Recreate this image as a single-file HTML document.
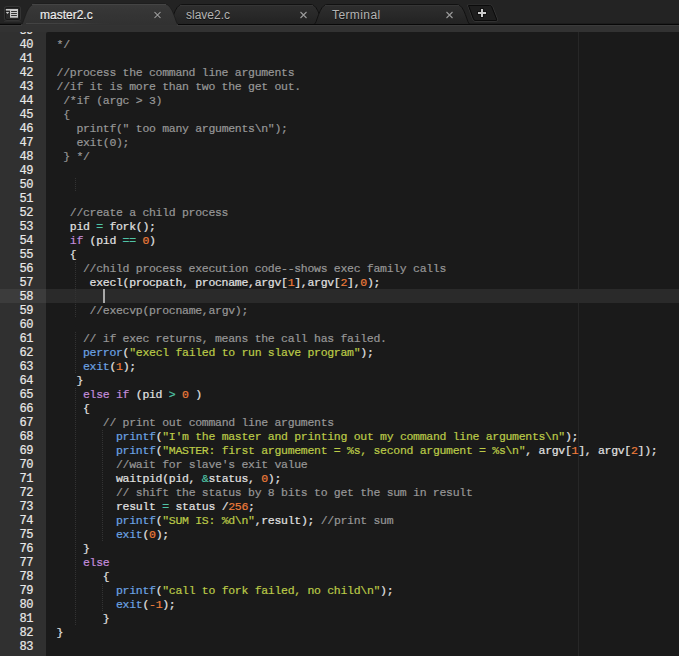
<!DOCTYPE html>
<html><head><meta charset="utf-8">
<style>
*{margin:0;padding:0;box-sizing:border-box}
html,body{width:679px;height:656px;overflow:hidden;background:#303030}
body{position:relative;font-family:"Liberation Mono",monospace}
#tabbar{position:absolute;left:0;top:0;width:679px;height:25px}
.tl{position:absolute;top:7px;height:16px;line-height:16px;font-family:"Liberation Sans",sans-serif;font-size:12px;color:#b4b4b4;text-shadow:0 1px 0 #111}
.tl.a{color:#ececec;-webkit-text-stroke:0.2px currentColor}
.tx{position:absolute;top:6px;font-family:"Liberation Sans",sans-serif;font-size:13px;line-height:16px;color:#9a9a9a}
#strip{position:absolute;left:0;top:25px;width:679px;height:7px;background:#323232;border-top:1px solid #3b3b3b}
#gutter{position:absolute;left:0;top:32px;width:46px;height:624px;background:#303030;overflow:hidden}
#code{position:absolute;left:46px;top:32px;width:633px;height:624px;background:#1a1a1a;overflow:hidden;border-top-left-radius:2px}
.l{position:absolute;left:56.6px;height:14px;line-height:14px;font-size:11.5px;letter-spacing:-0.3px;white-space:pre;color:#e2e2e2;-webkit-text-stroke:0.2px currentColor}
.g{position:absolute;right:13px;height:14px;line-height:14px;font-size:12px;letter-spacing:-0.5px;color:#e8e8e8;text-align:right;-webkit-text-stroke:0.2px currentColor}
.c{color:#979797}
.k{color:#c48ddc}
.f{color:#6ca3e4}
.s{color:#bccb48}
.n{color:#ef7d3a}
.o{color:#50c3a6}
.ig{position:absolute;width:1px;background-image:linear-gradient(transparent 50%,#333 50%);background-size:1px 2px}
#ruler{position:absolute;left:532px;top:0;width:1px;height:624px;background:#272727}
#hl{position:absolute;left:0;width:633px;height:14px;background:#2a2a2a}
#ghl{position:absolute;left:0;width:46px;height:14px;background:#3c3c3c}
#caret{position:absolute;width:2px;height:14px;background:#a9a9a9}
</style></head><body>
<div id="tabbar">
<svg width="679" height="25" style="position:absolute;left:0;top:0">
  <defs>
    <linearGradient id="gi" x1="0" y1="0" x2="0" y2="1"><stop offset="0" stop-color="#2e2e2e"/><stop offset="0.3" stop-color="#2b2b2b"/><stop offset="1" stop-color="#222222"/></linearGradient>
    <linearGradient id="ga" x1="0" y1="0" x2="0" y2="1"><stop offset="0" stop-color="#3a3a3a"/><stop offset="0.3" stop-color="#363636"/><stop offset="1" stop-color="#313131"/></linearGradient><linearGradient id="gh" x1="0" y1="0" x2="1" y2="0"><stop offset="0" stop-color="#444" stop-opacity="1"/><stop offset="0.5" stop-color="#3f3f3f" stop-opacity="1"/><stop offset="1" stop-color="#333" stop-opacity="0"/></linearGradient>
  </defs>
  <rect x="0" y="0" width="679" height="25" fill="#232323"/>
  <rect x="0" y="23" width="679" height="1" fill="#1c1c1c"/>
  <rect x="0" y="24" width="679" height="1" fill="#080808"/>
  <path d="M169,24.5 C172,24.5 174,4.5 182,4.5 L311,4.5 C319,4.5 321,24.5 324,24.5 Z" fill="url(#gi)"/>
  <path d="M169,24.5 C172,24.5 174,4.5 182,4.5 L311,4.5 C319,4.5 321,24.5 324,24.5" fill="none" stroke="#111" stroke-width="1"/>
  <path d="M180,5.5 L313,5.5" stroke="#353535" stroke-width="1"/>
  <path d="M314,24.5 C317,24.5 319,4.5 327,4.5 L457,4.5 C465,4.5 467,24.5 470,24.5 Z" fill="url(#gi)"/>
  <path d="M314,24.5 C317,24.5 319,4.5 327,4.5 L457,4.5 C465,4.5 467,24.5 470,24.5" fill="none" stroke="#111" stroke-width="1"/>
  <path d="M325,5.5 L459,5.5" stroke="#353535" stroke-width="1"/>
  <rect x="0" y="24" width="679" height="1" fill="#080808"/>
  <!-- plus button -->
  <path d="M467.5,5 L490,5 C492,5 492.5,6 493,7.5 L497.5,19 C498,21 497.5,21.5 495,21.5 L476,21.5 C474,21.5 473.5,21 472.5,19 Z" fill="none" stroke="#333" stroke-width="1"/>
  <path d="M468.5,5.5 L489.5,5.5 C491,5.5 491.5,6 492,7.5 L496.5,19 C497,20.5 496.5,20.5 495,20.5 L476,20.5 C474.5,20.5 474,20 473.5,19 Z" fill="#1e1e1e" stroke="#0b0b0b" stroke-width="1"/>
  <rect x="477" y="11" width="10" height="4" fill="#0e0e0e" opacity="0.7"/>
  <rect x="480" y="8" width="4" height="10" fill="#0e0e0e" opacity="0.7"/>
  <rect x="478" y="12" width="8" height="2" fill="#cccccc"/>
  <rect x="481" y="9" width="2" height="8" fill="#cccccc"/>
  <!-- active tab -->
  <path d="M21,25 C24,25 26,4 35,4 L164.5,4 C173.5,4 175.5,25 178.5,25 Z" fill="url(#ga)"/>
  <path d="M21,25 C24,25 26,4 35,4 L164.5,4 C173.5,4 175.5,25 178.5,25" fill="none" stroke="#141414" stroke-width="0.8" opacity="0.7"/>
  <rect x="26" y="23" width="90" height="1" fill="url(#gh)"/>
  <path d="M32,4.5 L166,4.5" stroke="#444" stroke-width="1"/>
  <rect x="21" y="24" width="157" height="1" fill="#313131"/>
  <!-- menu button -->
  <rect x="4" y="6" width="17" height="15" rx="3" fill="#343434"/>
  <rect x="5" y="7" width="15" height="13" rx="2" fill="#1a1a1a"/>
  <rect x="6" y="8" width="13" height="11" rx="1" fill="#2a2a2a"/>
  <path d="M4,21.5 L21,21.5" stroke="#2c2c2c" stroke-width="1"/>
  <rect x="5.8" y="9" width="12.2" height="1.6" fill="#cacaca"/>
  <rect x="10" y="9" width="8" height="8.7" fill="#cacaca"/>
  <rect x="11.1" y="11" width="5.8" height="0.9" fill="#222"/>
  <rect x="11.1" y="13.1" width="5.8" height="0.9" fill="#222"/>
  <rect x="11.1" y="15.1" width="5.8" height="0.9" fill="#222"/>
  <path d="M5.8,12 L9.2,12 L7.5,14 Z" fill="#cacaca"/>
</svg>

<div class="tl a" style="left:40px">master2.c</div>
<div class="tl" style="left:186px">slave2.c</div>
<div class="tl" style="left:332px;letter-spacing:0.4px">Terminal</div>
<svg width="679" height="25" style="position:absolute;left:0;top:0"><g stroke="#a8a8a8" stroke-width="1.05"><path d="M154.5,12 L160.5,18 M160.5,12 L154.5,18"/></g><g stroke="#9a9a9a" stroke-width="1.1"><path d="M300.5,12 L306.5,18 M306.5,12 L300.5,18"/><path d="M446.5,12 L452.5,18 M452.5,12 L446.5,18"/></g></svg>
</div>
<div id="strip"></div><div style="position:absolute;left:22px;top:25px;width:155px;height:1px;background:#333"></div><div id="gutter"><div id="ghl" style="top:257px"></div><div style="position:absolute;left:0;top:-32px;width:46px;height:656px"><div class="g" style="top:24px">39</div><div class="g" style="top:38px">40</div><div class="g" style="top:52px">41</div><div class="g" style="top:66px">42</div><div class="g" style="top:80px">43</div><div class="g" style="top:94px">44</div><div class="g" style="top:108px">45</div><div class="g" style="top:122px">46</div><div class="g" style="top:136px">47</div><div class="g" style="top:150px">48</div><div class="g" style="top:164px">49</div><div class="g" style="top:178px">50</div><div class="g" style="top:192px">51</div><div class="g" style="top:206px">52</div><div class="g" style="top:220px">53</div><div class="g" style="top:234px">54</div><div class="g" style="top:248px">55</div><div class="g" style="top:262px">56</div><div class="g" style="top:276px">57</div><div class="g" style="top:290px">58</div><div class="g" style="top:304px">59</div><div class="g" style="top:318px">60</div><div class="g" style="top:332px">61</div><div class="g" style="top:346px">62</div><div class="g" style="top:360px">63</div><div class="g" style="top:374px">64</div><div class="g" style="top:388px">65</div><div class="g" style="top:402px">66</div><div class="g" style="top:416px">67</div><div class="g" style="top:430px">68</div><div class="g" style="top:444px">69</div><div class="g" style="top:458px">70</div><div class="g" style="top:472px">71</div><div class="g" style="top:486px">72</div><div class="g" style="top:500px">73</div><div class="g" style="top:514px">74</div><div class="g" style="top:528px">75</div><div class="g" style="top:542px">76</div><div class="g" style="top:556px">77</div><div class="g" style="top:570px">78</div><div class="g" style="top:584px">79</div><div class="g" style="top:598px">80</div><div class="g" style="top:612px">81</div><div class="g" style="top:626px">82</div><div class="g" style="top:640px">83</div></div></div>
<div id="code">
<div id="ruler"></div>
<div id="hl" style="top:257px"></div>
<div style="position:absolute;left:-46px;top:-32px;width:679px;height:656px">
<div class="ig" style="left:75px;top:177px;height:14px"></div><div class="ig" style="left:75px;top:261px;height:56px"></div><div class="ig" style="left:75px;top:331px;height:42px"></div><div class="ig" style="left:75px;top:387px;height:238px"></div><div class="ig" style="left:102px;top:429px;height:112px"></div><div class="ig" style="left:102px;top:583px;height:28px"></div>
<div id="caret" style="left:103px;top:289px"></div>
<div class="l" style="top:24px"></div><div class="l" style="top:38px"><span class="c">*/</span></div><div class="l" style="top:52px"></div><div class="l" style="top:66px"><span class="c">//process the command line arguments</span></div><div class="l" style="top:80px"><span class="c">//if it is more than two the get out.</span></div><div class="l" style="top:94px"> <span class="c">/*if (argc &gt; 3)</span></div><div class="l" style="top:108px"> <span class="c">{</span></div><div class="l" style="top:122px">   <span class="c">printf(" too many arguments\n");</span></div><div class="l" style="top:136px">   <span class="c">exit(0);</span></div><div class="l" style="top:150px"> <span class="c">} */</span></div><div class="l" style="top:164px"></div><div class="l" style="top:178px"></div><div class="l" style="top:192px"></div><div class="l" style="top:206px">  <span class="c">//create a child process</span></div><div class="l" style="top:220px">  pid <span class="o">=</span> fork();</div><div class="l" style="top:234px">  <span class="k">if</span> (pid <span class="o">==</span> <span class="n">0</span>)</div><div class="l" style="top:248px">  {</div><div class="l" style="top:262px">    <span class="c">//child process execution code--shows exec family calls</span></div><div class="l" style="top:276px">     execl(procpath, procname,argv[<span class="n">1</span>],argv[<span class="n">2</span>],<span class="n">0</span>);</div><div class="l" style="top:290px"></div><div class="l" style="top:304px">     <span class="c">//execvp(procname,argv);</span></div><div class="l" style="top:318px"></div><div class="l" style="top:332px">    <span class="c">// if exec returns, means the call has failed.</span></div><div class="l" style="top:346px">    <span class="f">perror</span>(<span class="s">"</span><span class="s">execl failed to run slave program</span><span class="s">"</span>);</div><div class="l" style="top:360px">    <span class="f">exit</span>(<span class="n">1</span>);</div><div class="l" style="top:374px">   }</div><div class="l" style="top:388px">    <span class="k">else if</span> (pid <span class="o">&gt;</span> <span class="n">0</span> )</div><div class="l" style="top:402px">    {</div><div class="l" style="top:416px">       <span class="c">// print out command line arguments</span></div><div class="l" style="top:430px">         <span class="f">printf</span>(<span class="s">"</span><span class="s">I'm the master and printing out my command line arguments\n</span><span class="s">"</span>);</div><div class="l" style="top:444px">         <span class="f">printf</span>(<span class="s">"</span><span class="s">MASTER: first argumement = %s, second argument = %s\n</span><span class="s">"</span>, argv[<span class="n">1</span>], argv[<span class="n">2</span>]);</div><div class="l" style="top:458px">         <span class="c">//wait for slave's exit value</span></div><div class="l" style="top:472px">         waitpid(pid, <span class="o">&amp;</span>status, <span class="n">0</span>);</div><div class="l" style="top:486px">         <span class="c">// shift the status by 8 bits to get the sum in result</span></div><div class="l" style="top:500px">         result <span class="o">=</span> status /<span class="n">256</span>;</div><div class="l" style="top:514px">         <span class="f">printf</span>(<span class="s">"</span><span class="s">SUM IS: %d\n</span><span class="s">"</span>,result); <span class="c">//print sum</span></div><div class="l" style="top:528px">         <span class="f">exit</span>(<span class="n">0</span>);</div><div class="l" style="top:542px">    }</div><div class="l" style="top:556px">    <span class="k">else</span></div><div class="l" style="top:570px">       {</div><div class="l" style="top:584px">         <span class="f">printf</span>(<span class="s">"</span><span class="s">call to fork failed, no child\n</span><span class="s">"</span>);</div><div class="l" style="top:598px">         <span class="f">exit</span>(<span class="n">-1</span>);</div><div class="l" style="top:612px">       }</div><div class="l" style="top:626px">}</div><div class="l" style="top:640px"></div>
</div>
</div>
</body></html>
